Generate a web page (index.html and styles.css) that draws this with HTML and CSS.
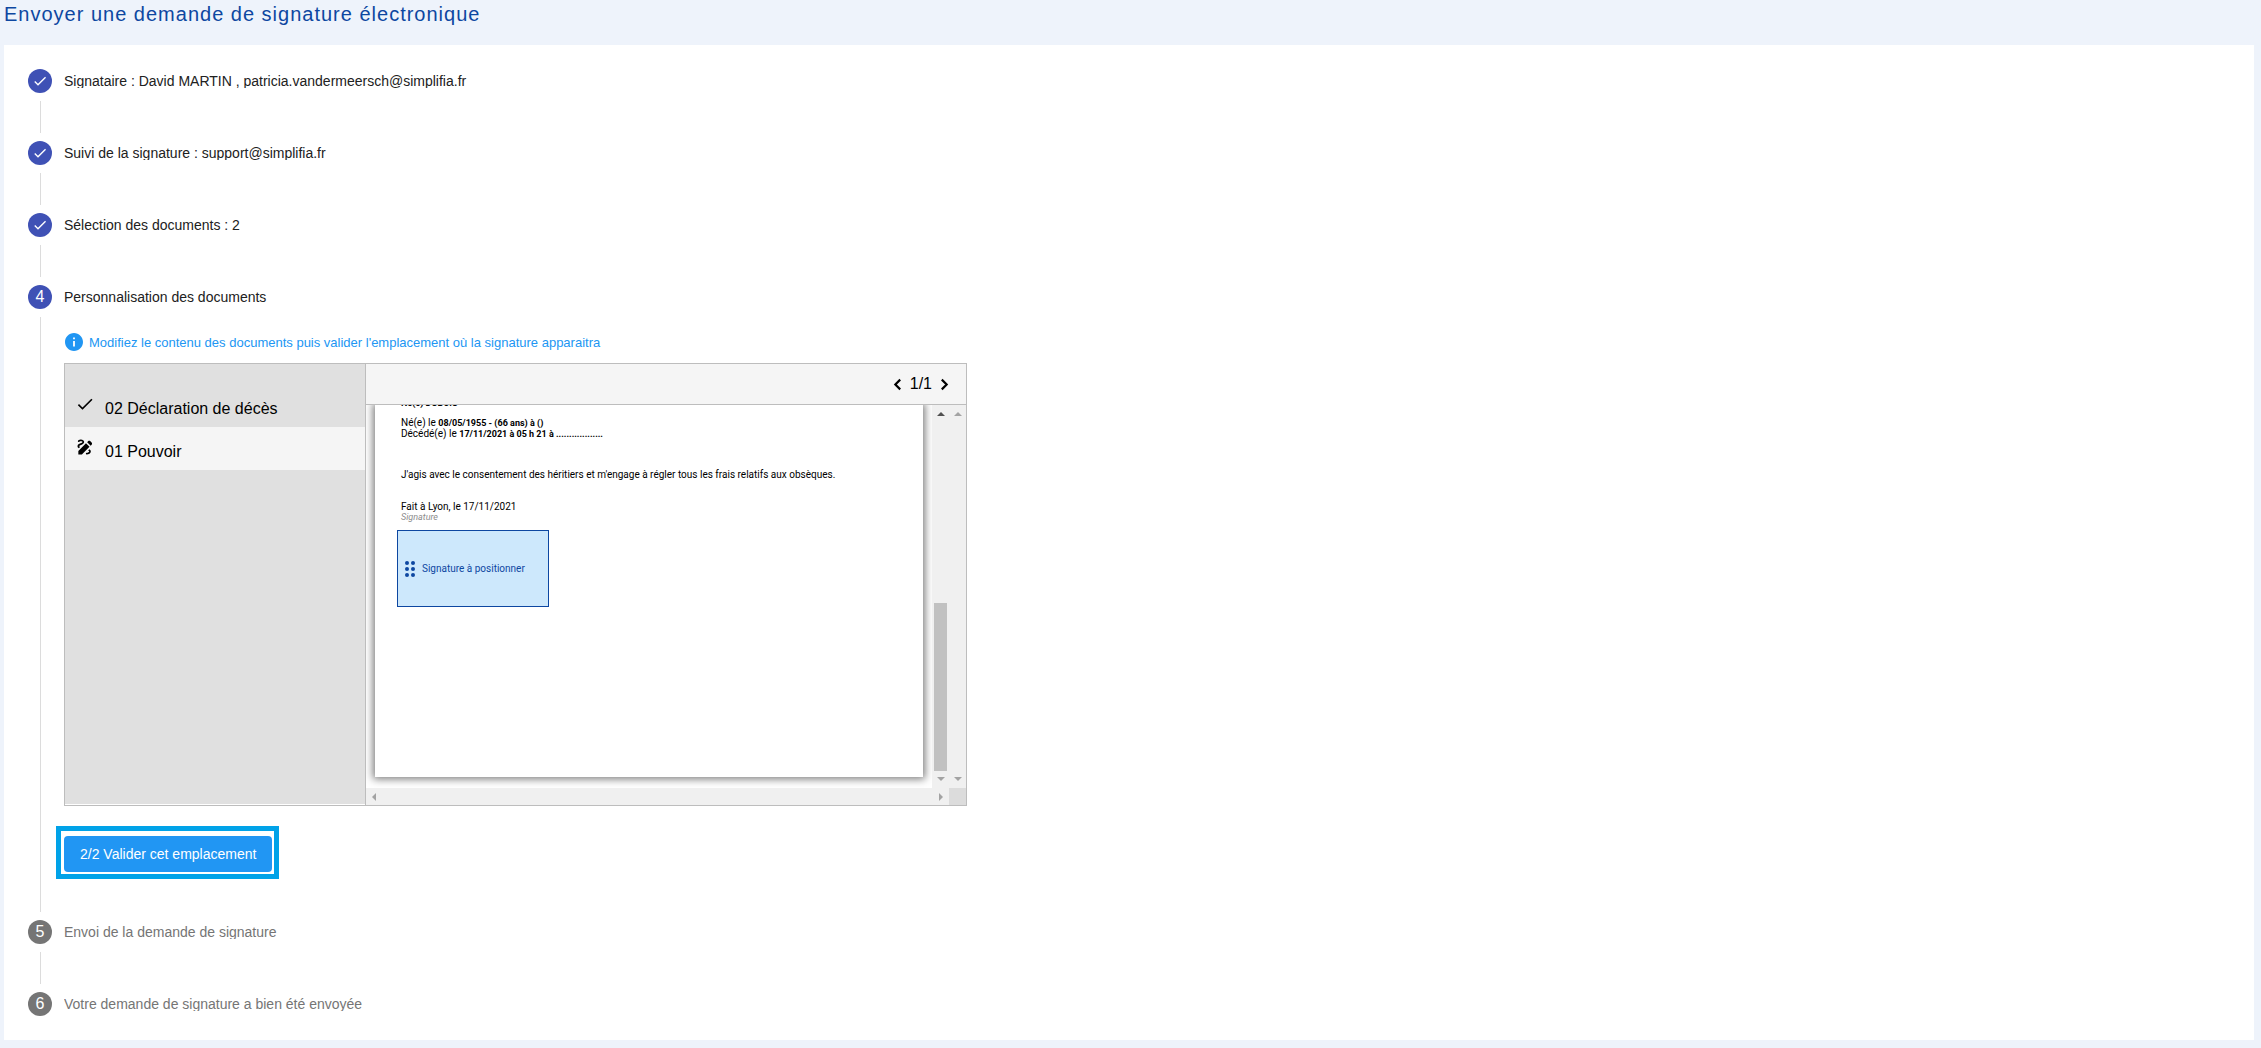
FILE: index.html
```html
<!DOCTYPE html>
<html lang="fr">
<head>
<meta charset="utf-8">
<title>Envoyer une demande de signature électronique</title>
<link rel="stylesheet" href="styles.css">
</head>
<body>
<h1 class="title">Envoyer une demande de signature électronique</h1>
<main class="card">
  <ol class="stepper">
    <li class="step">
      <div class="rail"><span class="badge"><svg class="tick" viewBox="0 0 24 24"><path d="M9 16.2 4.8 12l-1.400 1.400L9 19 21 7l-1.400-1.400z"/></svg></span></div>
      <div class="step-main"><p class="label">Signataire : David MARTIN , patricia.vandermeersch@simplifia.fr</p></div>
    </li>
    <li class="step">
      <div class="rail"><span class="badge"><svg class="tick" viewBox="0 0 24 24"><path d="M9 16.2 4.8 12l-1.400 1.400L9 19 21 7l-1.400-1.400z"/></svg></span></div>
      <div class="step-main"><p class="label">Suivi de la signature : support@simplifia.fr</p></div>
    </li>
    <li class="step">
      <div class="rail"><span class="badge"><svg class="tick" viewBox="0 0 24 24"><path d="M9 16.2 4.8 12l-1.400 1.400L9 19 21 7l-1.400-1.400z"/></svg></span></div>
      <div class="step-main"><p class="label">Sélection des documents : 2</p></div>
    </li>
    <li class="step">
      <div class="rail"><span class="badge">4</span></div>
      <div class="step-main">
        <p class="label">Personnalisation des documents</p>
        <p class="info">
          <svg class="info-icon" viewBox="2 2 20 20"><path d="M12 2C6.480 2 2 6.480 2 12s4.480 10 10 10 10-4.480 10-10S17.520 2 12 2zm1 15h-2v-6h2v6zm0-8h-2V7h2v2z"/></svg>
          Modifiez le contenu des documents puis valider l'emplacement où la signature apparaitra
        </p>
        <section class="editor">
          <nav class="files">
            <button class="file" type="button">
              <svg class="file-icon" viewBox="0 0 24 24"><path d="M9 16.2 4.8 12l-1.400 1.400L9 19 21 7l-1.400-1.400z"/></svg>
              <span>02 Déclaration de décès</span>
            </button>
            <button class="file file-current" type="button">
              <svg class="file-icon" viewBox="0 0 24 24"><path d="M18.850 10.390l1.060-1.060c.78-.78.78-2.050 0-2.830L18.500 5.090c-.78-.78-2.050-.78-2.830 0l-1.060 1.060 4.240 4.240zm-5.660-2.830L4 16.760V21h4.240l9.190-9.190-4.240-4.250zM19 17.500c0 2.190-2.540 3.500-5 3.500-.55 0-1-.45-1-1s.45-1 1-1c1.540 0 3-.73 3-1.500 0-.47-.48-.87-1.230-1.200l1.480-1.480c1.070.63 1.750 1.470 1.750 2.680zM4.580 13.350C3.610 12.790 3 12.060 3 11c0-1.800 1.890-2.630 3.560-3.360C7.590 7.180 9 6.560 9 6c0-.41-.78-1-2-1-1.260 0-1.800.61-1.830.64-.35.41-.98.46-1.400.12-.41-.34-.49-.95-.15-1.380C3.730 4.240 4.760 3 7 3s4 1.320 4 3c0 1.870-1.930 2.720-3.640 3.470C6.420 9.880 5 10.500 5 11c0 .31.43.6 1.070.86l-1.490 1.490z"/></svg>
              <span>01 Pouvoir</span>
            </button>
          </nav>
          <div class="viewer">
            <div class="toolbar">
              <button class="pager" type="button" aria-label="Page précédente"><svg viewBox="0 0 8 12"><path d="M6.500 1.500 2 6l4.500 4.500"/></svg></button>
              <span class="page-count">1/1</span>
              <button class="pager" type="button" aria-label="Page suivante"><svg viewBox="0 0 8 12"><path d="M1.500 1.500 6 6l-4.500 4.500"/></svg></button>
            </div>
            <div class="canvas">
              <div class="canvas-view">
                <article class="sheet">
                  <p class="cut"><b>Né(e) DUBOIS</b></p>
                  <p>Né(e) le <b>08/05/1955 - (66 ans) à ()</b></p>
                  <p>Décédé(e) le <b>17/11/2021 à 05 h 21 à ..................</b></p>
                  <p class="consent">J'agis avec le consentement des héritiers et m'engage à régler tous les frais relatifs aux obsèques.</p>
                  <p class="place">Fait à Lyon, le 17/11/2021</p>
                  <p class="hint">Signature</p>
                  <div class="sign-box">
                    <svg class="grip" viewBox="0 0 10 16"><circle cx="2" cy="2" r="2"/><circle cx="8" cy="2" r="2"/><circle cx="2" cy="8" r="2"/><circle cx="8" cy="8" r="2"/><circle cx="2" cy="14" r="2"/><circle cx="8" cy="14" r="2"/></svg>
                    Signature à positionner
                  </div>
                </article>
              </div>
              <div class="vbar">
                <i class="arrow up active"></i><i class="thumb"></i><i class="arrow down"></i>
              </div>
              <div class="vbar">
                <i class="arrow up"></i><i class="arrow down"></i>
              </div>
              <div class="hbar"><i class="arrow left"></i><i class="arrow right"></i></div>
              <div class="corner"></div>
            </div>
          </div>
        </section>
        <div class="highlight"><button class="primary" type="button">2/2 Valider cet emplacement</button></div>
      </div>
    </li>
    <li class="step pending">
      <div class="rail"><span class="badge">5</span></div>
      <div class="step-main"><p class="label">Envoi de la demande de signature</p></div>
    </li>
    <li class="step pending">
      <div class="rail"><span class="badge">6</span></div>
      <div class="step-main"><p class="label">Votre demande de signature a bien été envoyée</p></div>
    </li>
  </ol>
</main>
</body>
</html>
```
FILE: styles.css
```css
* { box-sizing: border-box; }
body {
  margin: 0;
  padding: 0 7px 8px 4px;
  background: #eef3fb;
  color: #212121;
  font-family: "Liberation Sans", Arial, sans-serif;
  font-size: 14px;
}
p, h1, ol { margin: 0; padding: 0; }
button { margin: 0; border: 0; font-family: inherit; cursor: pointer; }
.title {
  height: 45px;
  padding-top: 2px;
  color: #0d47a1;
  font-size: 20px;
  line-height: 24px;
  font-weight: 400;
  letter-spacing: 1px;
}
.card { padding: 24px; background: #fff; }
.stepper { list-style: none; }

.step { display: flex; gap: 12px; min-height: 72px; }
.step:last-child { min-height: 0; }
.rail { display: flex; flex-direction: column; align-items: center; gap: 8px; width: 24px; padding-bottom: 8px; }
.rail::after { content: ""; flex: 1; width: 1px; background: #dcdcdc; }
.step:last-child .rail { padding-bottom: 0; }
.step:last-child .rail::after { display: none; }
.badge {
  display: flex;
  align-items: center;
  justify-content: center;
  width: 24px;
  height: 24px;
  border-radius: 50%;
  background: #3f51b5;
  color: #fff;
  font-size: 16px;
  line-height: 24px;
}
.tick { width: 16px; height: 16px; fill: #fff; }
.step-main { flex: 1; min-width: 0; }
.label { margin: 5px 0; line-height: 14px; overflow: hidden; }
.pending .badge { background: #757575; }
.pending .label { color: #757575; }

.info {
  display: flex;
  align-items: center;
  gap: 6px;
  margin-top: 28px;
  padding-left: 1px;
  height: 20px;
  color: #2196f3;
  font-size: 13px;
}
.info-icon { width: 18px; height: 18px; fill: #2196f3; }

.editor {
  display: flex;
  width: 903px;
  max-width: 100%;
  height: 443px;
  margin-top: 11px;
  border: 1px solid #bdbdbd;
}
.files {
  width: 301px;
  padding-top: 20px;
  border-right: 1px solid #bdbdbd;
  background: #e0e0e0;
  box-shadow: inset 0 -1px #fff;
}
.file {
  display: flex;
  align-items: center;
  gap: 10px;
  width: 100%;
  height: 43px;
  padding: 0 10px;
  background: none;
  color: #000;
  font-size: 16px;
  text-align: left;
}
.file span { padding-top: 6px; }
.file-current { background: #f5f5f5; }
.file-icon { width: 20px; height: 20px; margin-bottom: 4px; }

.viewer { flex: 1; display: flex; flex-direction: column; min-width: 0; }
.toolbar {
  display: flex;
  align-items: center;
  justify-content: flex-end;
  gap: 8px;
  height: 41px;
  padding-right: 17px;
  border-bottom: 1px solid #bdbdbd;
  background: #f5f5f5;
  color: #000;
  font-size: 16px;
}
.pager { display: flex; padding: 0; background: none; }
.pager svg { width: 9px; height: 13px; fill: none; stroke: #000; stroke-width: 2; }

.canvas { flex: 1; min-height: 0; display: grid; grid-template: minmax(0, 1fr) 17px / minmax(0, 1fr) 17px 17px; }
.canvas-view { padding: 0 9px 11px; background: #fff; overflow: hidden; }
.sheet {
  display: flow-root;
  height: 100%;
  padding: 0 26px;
  background: #fff;
  box-shadow: 0 0 8px 2px #7a7a7a;
  color: #000;
  font-family: Roboto, sans-serif;
  font-size: 10px;
  line-height: 11px;
}
.sheet b { font-size: 9px; line-height: 9px; }
.cut { margin-top: -8px; padding-bottom: 9px; }
.consent { margin-top: 30px; }
.place { margin-top: 21px; }
.hint { color: #8c8c8c; font-size: 9px; font-style: italic; }
.sign-box {
  display: flex;
  align-items: center;
  gap: 7px;
  width: 152px;
  height: 77px;
  margin: 7px 0 0 -4px;
  padding-left: 7px;
  border: 1px solid #0d47a1;
  background: #cde8fc;
  color: #0d47a1;
}
.grip { width: 10px; height: 16px; fill: #0d47a1; }

.vbar, .hbar { display: flex; align-items: center; justify-content: space-between; background: #f0f0f0; }
.vbar { flex-direction: column; padding: 7px 0; }
.hbar { grid-column: 1 / 3; padding: 0 6px; }
.corner { background: #dcdcdc; }
.thumb { width: 13px; height: 168px; margin: auto 0 6px; background: #c1c1c1; }
.arrow { border: 4px solid transparent; }
.up { border-top: 0; border-bottom-color: #a3a3a3; }
.up.active { border-bottom-color: #505050; }
.down { border-bottom: 0; border-top-color: #a3a3a3; }
.left { border-left: 0; border-right-color: #a3a3a3; }
.right { border-right: 0; border-left-color: #a3a3a3; }

.highlight {
  width: fit-content;
  margin: 20px 0 41px -8px;
  padding: 5px 2px 2px 3px;
  border: 5px solid #00a2e8;
}
.primary {
  display: block;
  height: 36px;
  padding: 0 16px;
  border-radius: 4px;
  background: #2196f3;
  color: #fff;
  font-size: 14px;
}
```
